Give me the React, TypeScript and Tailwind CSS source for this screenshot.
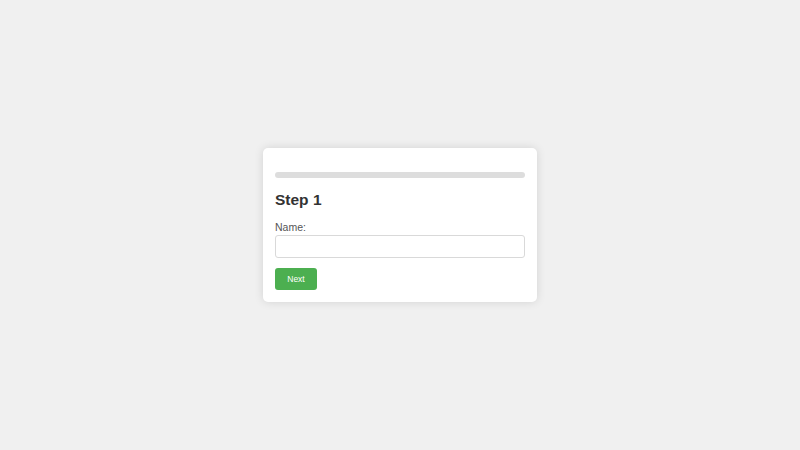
import React from "react";

export default function App() {
  return (
    <div
      className="min-h-screen w-full bg-[#f0f0f0] flex items-center justify-center"
      style={{ fontFamily: '"Liberation Sans", Arial, sans-serif' }}
    >
      <div className="w-[274px] bg-white rounded-[5px] p-3 shadow-[0_0_10px_rgba(0,0,0,0.12)] flex flex-col">
        <div className="mt-3 h-[6px] w-full rounded-full bg-[#dddddd]" />
        <h2 className="mt-[13px] text-[15.5px] leading-[18px] font-bold text-[#333333]">Step 1</h2>
        <label className="mt-3 text-[10.5px] leading-[12px] text-[#555555]">Name:</label>
        <input
          type="text"
          className="mt-[2px] h-[23px] w-full rounded-[3px] border border-[#d9d9d9] bg-white px-2 outline-none"
        />
        <div className="mt-[10px] flex">
          <button className="block h-[22px] w-[42px] rounded-[3px] bg-[#4caf50] text-white text-[8.5px] leading-[22px] text-center">
            Next
          </button>
        </div>
      </div>
    </div>
  );
}
